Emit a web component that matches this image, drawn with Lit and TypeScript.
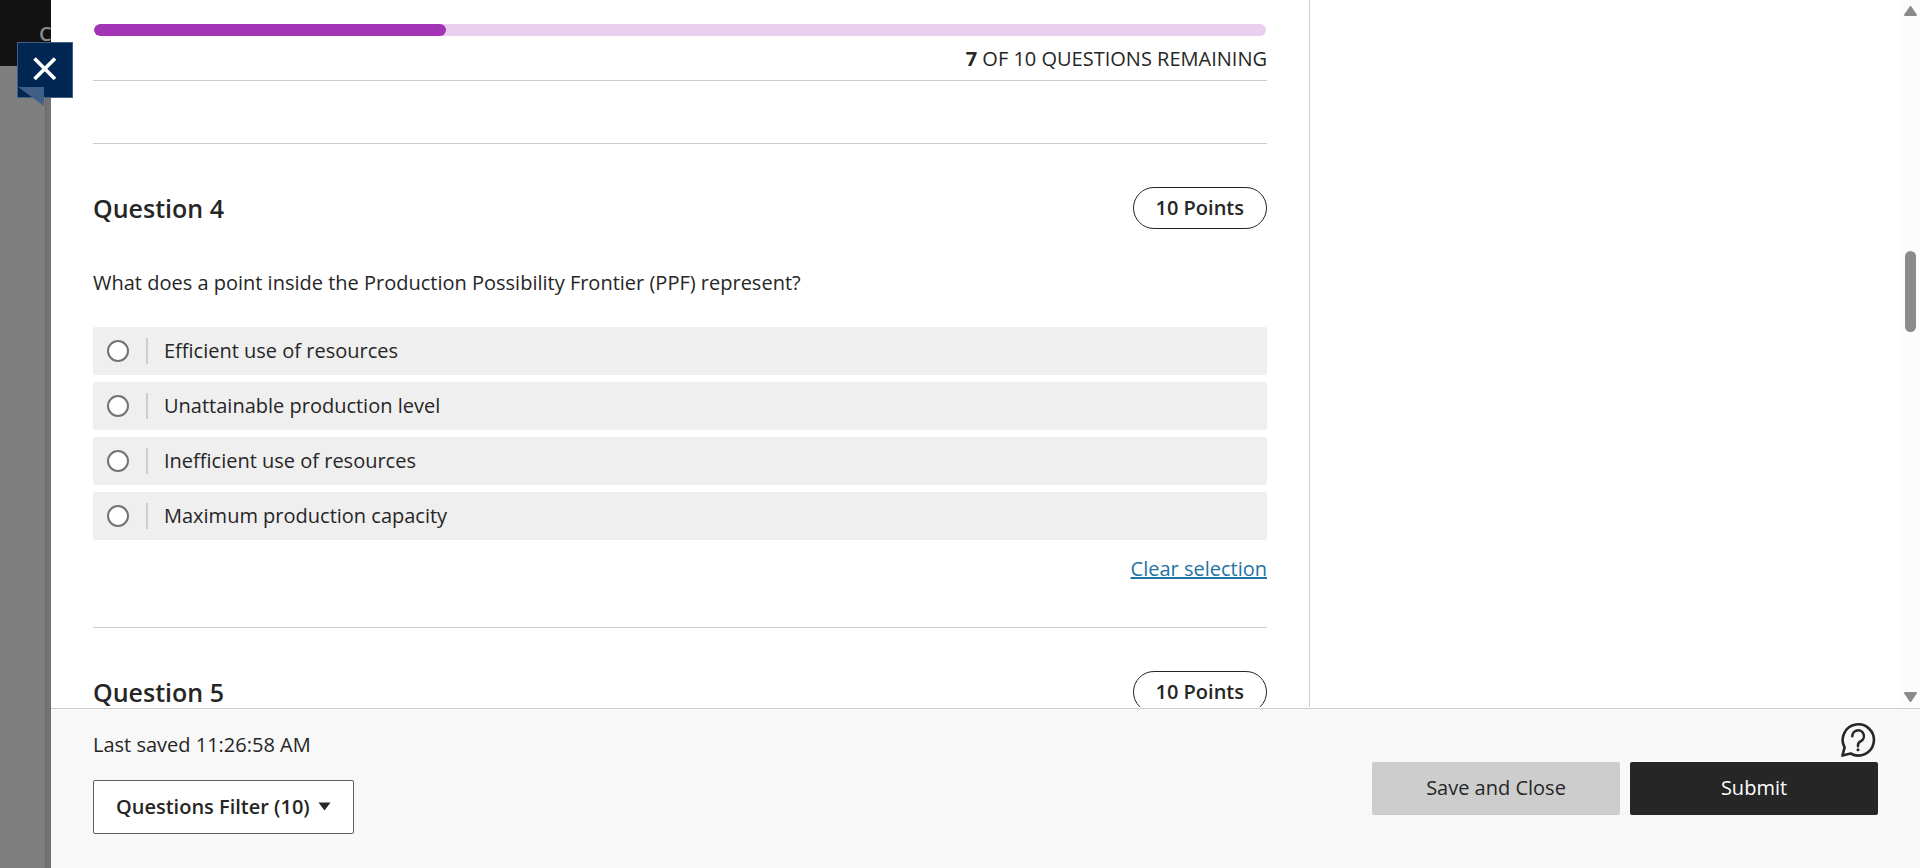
import { LitElement, html, css, svg } from "lit";
import { customElement, property, state } from "lit/decorators.js";

interface Question {
  number: number;
  points: number;
  prompt: string;
  options: string[];
}

const QUESTIONS: Question[] = [
  {
    number: 4,
    points: 10,
    prompt: "What does a point inside the Production Possibility Frontier (PPF) represent?",
    options: [
      "Efficient use of resources",
      "Unattainable production level",
      "Inefficient use of resources",
      "Maximum production capacity",
    ],
  },
  { number: 5, points: 10, prompt: "", options: [] },
];

const closeIcon = svg`<svg width="24" height="24" viewBox="0 0 24 24" aria-hidden="true">
  <path d="M1.500 1.500 22 22M22 1.500 1.500 22" fill="none" stroke="#fff" stroke-width="3.700"/>
</svg>`;

const helpIcon = svg`<svg width="36" height="36" viewBox="0 0 36 36" aria-hidden="true">
  <path d="M4.600 25.400A15.600 15.600 0 1 1 10.600 31.500L2.400 33.600Z" fill="none" stroke="#262626" stroke-width="2.600" stroke-linejoin="round"/>
  <path d="M12.300 14.200a5.800 5.800 0 1 1 8.600 5c-2 1.100-2.900 1.900-2.900 3.800v1.300" fill="none" stroke="#262626" stroke-width="2.500" stroke-linecap="round"/>
  <circle cx="18" cy="27.800" r="1.500" fill="#262626"/>
</svg>`;

@customElement("quiz-question")
export class QuizQuestion extends LitElement {
  @property({ attribute: false }) question!: Question;
  @state() private selected = -1;

  static styles = css`
    :host {
      display: block;
      border-top: 1px solid #cdcdcd;
      padding: 43px 0 45px;
    }
    .head {
      display: flex;
      align-items: center;
      justify-content: space-between;
    }
    .title {
      margin: 0;
      font-size: 25px;
      line-height: 36px;
      font-weight: 600;
    }
    .points {
      box-sizing: border-box;
      height: 42px;
      padding: 0 22px;
      border: 1px solid #262626;
      border-radius: 21px;
      line-height: 40px;
      font-weight: 600;
    }
    .prompt {
      margin: 40px 0 30px;
      line-height: 28px;
    }
    .options {
      display: grid;
      gap: 7px;
      margin: 0;
      padding: 0;
      border: 0;
    }
    .option {
      display: flex;
      align-items: center;
      min-height: 48px;
      padding-left: 14px;
      border-radius: 2px;
      background: #efefef;
      cursor: pointer;
    }
    .radio {
      appearance: none;
      box-sizing: border-box;
      width: 22px;
      height: 22px;
      margin: 0;
      border: 2px solid #737373;
      border-radius: 50%;
      background: #fff;
    }
    .radio:checked {
      background: radial-gradient(#262626 45%, #fff 50%);
    }
    .label {
      margin-left: 17px;
      padding-left: 16px;
      border-left: 2px solid #cdcdcd;
      line-height: 26px;
    }
    .clear-row {
      display: flex;
      justify-content: flex-end;
      margin-top: 16px;
    }
    .clear {
      padding: 0;
      border: 0;
      background: none;
      color: #1e74a2;
      font: inherit;
      line-height: 26px;
      text-decoration: underline;
      cursor: pointer;
    }
  `;

  render() {
    const q = this.question;
    return html`
      <div class="head">
        <h2 class="title">Question ${q.number}</h2>
        <span class="points">${q.points} Points</span>
      </div>
      ${q.options.length
        ? html`
            <p class="prompt" id="prompt">${q.prompt}</p>
            <fieldset class="options" aria-labelledby="prompt">
              ${q.options.map(
                (text, i) => html`
                  <label class="option">
                    <input
                      class="radio"
                      type="radio"
                      name="answer"
                      .checked=${this.selected === i}
                      @change=${() => (this.selected = i)}
                    />
                    <span class="label">${text}</span>
                  </label>
                `
              )}
            </fieldset>
            <div class="clear-row">
              <button class="clear" type="button" @click=${() => (this.selected = -1)}>Clear selection</button>
            </div>
          `
        : null}
    `;
  }
}

@customElement("app-root")
export class AppRoot extends LitElement {
  @property({ type: Number }) total = 10;
  @property({ type: Number }) remaining = 7;

  static styles = css`
    :host {
      display: flex;
      position: relative;
      height: 100vh;
      overflow: hidden;
      background: #fff;
      color: #262626;
      font-family: "Open Sans", "Noto Sans", sans-serif;
      font-size: 20px;
    }
    .backdrop {
      display: flex;
      flex-direction: column;
      flex: 0 0 51px;
      overflow: hidden;
      background: #7f7f7f;
    }
    .backdrop-bar {
      box-sizing: border-box;
      height: 66px;
      padding: 20px 0 0 39px;
      background: #121212;
      color: #8c8c8c;
      font-weight: 600;
      line-height: 28px;
    }
    .backdrop-page {
      flex: 1;
      margin-right: 5px;
      border-right: 1px solid #696969;
      box-shadow: 5px 0 0 #737373;
    }
    .close {
      position: absolute;
      left: 17px;
      top: 42px;
      display: grid;
      place-items: center;
      width: 56px;
      height: 56px;
      padding: 0 0 2px;
      border: 1px solid #3f5f86;
      background: #002654;
      cursor: pointer;
    }
    .tail {
      position: absolute;
      left: 0;
      top: 44px;
    }
    .panel {
      display: flex;
      flex-direction: column;
      gap: 1px;
      flex: 1;
      min-width: 0;
    }
    .body {
      display: flex;
      flex: 1;
      min-height: 0;
      overflow: hidden;
    }
    .scroll {
      display: flex;
      flex: 1;
      min-width: 0;
    }
    .column {
      flex: 1;
      min-width: 0;
      padding: 24px 42px 0;
    }
    .side {
      box-sizing: border-box;
      flex: 0 0 32%;
      border-left: 1px solid #cdcdcd;
    }
    .status {
      margin-bottom: 62px;
      padding-bottom: 7px;
      border-bottom: 1px solid #cdcdcd;
    }
    .track {
      height: 12px;
      margin: 0 1px;
      border-radius: 6px;
      background: #ebcff0;
      overflow: hidden;
    }
    .fill {
      height: 100%;
      border-radius: 6px;
      background: #a234b5;
    }
    .remaining {
      margin: 9px 0 0;
      line-height: 28px;
      text-align: right;
    }
    .scrollbar {
      box-sizing: border-box;
      display: flex;
      flex-direction: column;
      align-items: center;
      justify-content: space-between;
      flex: 0 0 19px;
      padding: 6px 0 5px;
      background: #fcfcfc;
    }
    .rail {
      flex: 1;
      display: grid;
      grid-template-rows: 235fr 81fr 359fr;
    }
    .thumb {
      grid-row: 2;
      width: 11px;
      border-radius: 6px;
      background: #8b8b8b;
    }
    .footer {
      display: flex;
      justify-content: space-between;
      padding: 22px 42px 34px;
      border-top: 1px solid #cdcdcd;
      background: #f8f8f8;
    }
    .saved {
      margin: 0 0 21px;
      line-height: 28px;
    }
    .button {
      box-sizing: border-box;
      height: 54px;
      padding: 0 22px 2px;
      border: 1px solid transparent;
      border-radius: 2px;
      color: #262626;
      font: inherit;
      cursor: pointer;
    }
    .filter {
      display: flex;
      align-items: center;
      gap: 8px;
      border-color: #5c5c5c;
      background: #fff;
      font-weight: 600;
    }
    .actions {
      display: flex;
      flex-direction: column;
      align-items: flex-end;
      margin-top: -9px;
      gap: 4px;
    }
    .help {
      display: grid;
      margin-right: 2px;
      padding: 0;
      border: 0;
      background: none;
      cursor: pointer;
    }
    .action-row {
      display: flex;
      gap: 10px;
    }
    .action {
      width: 248px;
      height: 53px;
      background: #cdcdcd;
    }
    .submit {
      background: #262626;
      color: #fff;
    }
  `;

  render() {
    const done = ((this.total - this.remaining) / this.total) * 100;
    return html`
      <div class="backdrop" aria-hidden="true">
        <div class="backdrop-bar">C</div>
        <div class="backdrop-page"></div>
      </div>
      <main class="panel">
        <div class="body">
          <div class="scroll">
            <div class="column">
              <div class="status">
                <div
                  class="track"
                  role="progressbar"
                  aria-label="Questions answered"
                  aria-valuenow=${done}
                  aria-valuemin="0"
                  aria-valuemax="100"
                >
                  <div class="fill" style="width: ${done}%"></div>
                </div>
                <p class="remaining"><b>${this.remaining}</b> OF ${this.total} QUESTIONS REMAINING</p>
              </div>
              ${QUESTIONS.map((q) => html`<quiz-question .question=${q}></quiz-question>`)}
            </div>
            <aside class="side"></aside>
          </div>
          <div class="scrollbar" aria-hidden="true">
            <svg width="13" height="10" viewBox="0 0 13 10">
              <path d="M6.500 1 12 9H1Z" fill="#8b8b8b" stroke="#8b8b8b" stroke-width="2" stroke-linejoin="round"/>
            </svg>
            <div class="rail"><div class="thumb"></div></div>
            <svg width="13" height="10" viewBox="0 0 13 10">
              <path d="M6.500 9 12 1H1Z" fill="#8b8b8b" stroke="#8b8b8b" stroke-width="2" stroke-linejoin="round"/>
            </svg>
          </div>
        </div>
        <footer class="footer">
          <div>
            <p class="saved">Last saved 11:26:58 AM</p>
            <button class="button filter" type="button">
              Questions Filter (${this.total})
              <svg width="13" height="9" viewBox="0 0 13 9" aria-hidden="true">
                <path d="M0.500 0.500h12L6.500 8.500Z" fill="#262626"/>
              </svg>
            </button>
          </div>
          <div class="actions">
            <button class="help" type="button" aria-label="Help">${helpIcon}</button>
            <div class="action-row">
              <button class="button action" type="button">Save and Close</button>
              <button class="button action submit" type="button">Submit</button>
            </div>
          </div>
        </footer>
      </main>
      <button class="close" type="button" aria-label="Close">
        ${closeIcon}
        <svg class="tail" width="26" height="19" viewBox="0 0 26 19" aria-hidden="true">
          <path d="M0 0h26v19Z" fill="#3f5f86"/>
        </svg>
      </button>
    `;
  }
}
